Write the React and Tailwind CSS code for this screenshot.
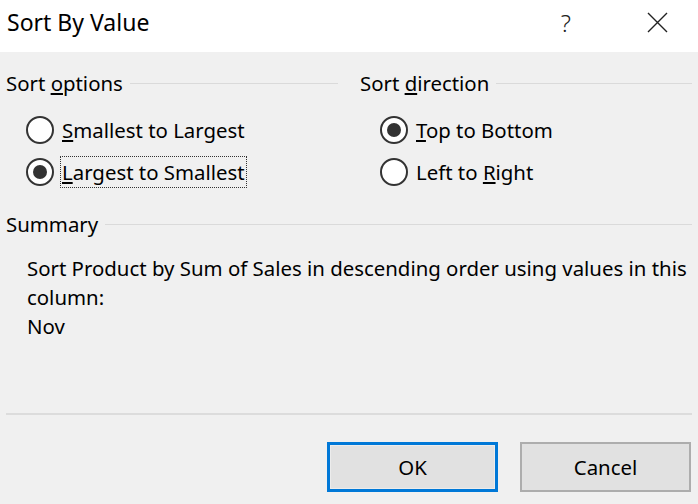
import React from "react";

function GroupHeader({ children, className = "" }) {
  return (
    <div className={"flex items-center h-[26px] " + className}>
      <span className="whitespace-nowrap">{children}</span>
      <div className="flex-1 h-px bg-[#dadada] ml-[7px]" />
    </div>
  );
}

function Radio({ checked, children, focused }) {
  return (
    <div className="flex items-center h-[42px]">
      <div className="w-[28px] h-[28px] rounded-full border-2 border-[#333] bg-white flex items-center justify-center shrink-0">
        {checked && <div className="w-[14px] h-[14px] rounded-full bg-[#333]" />}
      </div>
      <span
        className={
          "ml-[7px] px-[1px] leading-[30px] " +
          (focused ? "outline outline-1 outline-dotted outline-[#333]" : "")
        }
      >
        {children}
      </span>
    </div>
  );
}

export default function App() {
  return (
    <div
      className="w-[698px] h-[504px] bg-[#f0f0f0] text-black text-[20.4px] overflow-hidden"
      style={{ fontFamily: '"Noto Sans", "Open Sans", sans-serif' }}
    >
      {/* title bar */}
      <div className="h-[52px] bg-white flex items-center pl-[7px] pr-[30px] pb-[7px]">
        <span className="text-[23px] flex-1">Sort By Value</span>
        <span className="text-[24px] font-light text-[#222] mr-[76px]">?</span>
        <svg width="21" height="21" viewBox="0 0 21 21" className="text-[#222]">
          <path d="M1 1L20 20M20 1L1 20" stroke="currentColor" strokeWidth="1.4" />
        </svg>
      </div>

      <div className="px-[6px]">
        <div className="flex mt-[18px]">
          {/* sort options */}
          <div className="w-[332px]">
            <GroupHeader>
              Sort <span className="underline">o</span>ptions
            </GroupHeader>
            <div className="pl-[20px] mt-[13px]">
              <Radio>
                <span className="underline">S</span>mallest to Largest
              </Radio>
              <Radio checked focused>
                <span className="underline">L</span>argest to Smallest
              </Radio>
            </div>
          </div>
          {/* sort direction */}
          <div className="flex-1 ml-[22px]">
            <GroupHeader>
              Sort <span className="underline">d</span>irection
            </GroupHeader>
            <div className="pl-[20px] mt-[13px]">
              <Radio checked>
                <span className="underline">T</span>op to Bottom
              </Radio>
              <Radio>
                Left to <span className="underline">R</span>ight
              </Radio>
            </div>
          </div>
        </div>

        <GroupHeader className="mt-[18px]">Summary</GroupHeader>
        <div className="pl-[21px] mt-[17px] leading-[29px]">
          Sort Product by Sum of Sales in descending order using values in this column:
          <br />
          Nov
        </div>

        <div className="h-[2px] bg-[#dcdcdc] mt-[72px]" />

        <div className="flex justify-end gap-[22px] mt-[27px] pr-[1px]">
          <button className="w-[171px] h-[50px] bg-[#e1e1e1] border-[3px] border-[#0078d7] shadow-[inset_0_0_0_1px_#ececec]">
            OK
          </button>
          <button className="w-[171px] h-[50px] bg-[#e1e1e1] border-2 border-[#adadad]">
            Cancel
          </button>
        </div>
      </div>
    </div>
  );
}
